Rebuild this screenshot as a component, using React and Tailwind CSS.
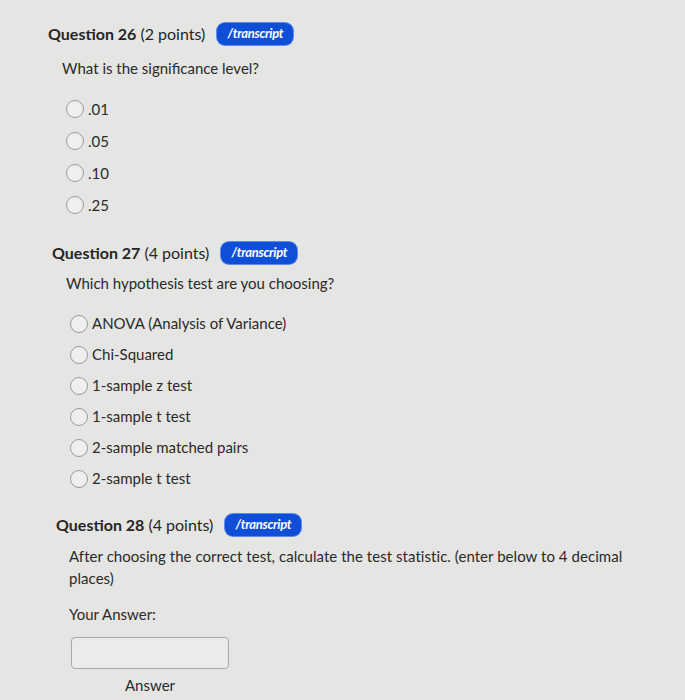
const Badge = () => (
  <span className="ml-[12px] inline-flex h-[22px] w-[76px] items-center justify-center rounded-[8px] bg-[#0f4fd8] text-[13px] font-bold italic tracking-[-0.3px] text-white ring-1 ring-[#5c8bea]">
    /transcript
  </span>
);

const Heading = ({ num, points }) => (
  <div className="flex h-[22px] items-center text-[16px] text-[#262626]">
    <span className="font-bold">Question {num}</span>
    <span className="ml-[4px]">({points} points)</span>
    <Badge />
  </div>
);

const Radio = ({ label, h }) => (
  <div className={`flex items-center ${h}`}>
    <span className="h-[18px] w-[18px] shrink-0 rounded-full border border-[#9a9a9a] bg-[#efefee]" />
    <span className="ml-[4px] text-[15px] text-[#2a2a2a]">{label}</span>
  </div>
);

export default function App() {
  return (
    <div
      className="h-[700px] w-[685px] overflow-hidden bg-[#e5e5e3] text-[#2a2a2a]"
      style={{ fontFamily: "Lato, 'Open Sans', sans-serif" }}
    >
      {/* Question 26 */}
      <div className="pl-[48px] pt-[23px]">
        <Heading num="26" points="2" />
        <div className="mt-[13px] pl-[14px] text-[15px] leading-[20px]">
          What is the significance level?
        </div>
        <div className="mt-[15px] pl-[18px]">
          {[".01", ".05", ".10", ".25"].map((o) => (
            <Radio key={o} label={o} h="h-[32px]" />
          ))}
        </div>
      </div>

      {/* Question 27 */}
      <div className="mt-[21px] pl-[52px]">
        <Heading num="27" points="4" />
        <div className="mt-[9px] pl-[14px] text-[15px] leading-[20px]">
          Which hypothesis test are you choosing?
        </div>
        <div className="mt-[15px] pl-[18px]">
          {[
            "ANOVA (Analysis of Variance)",
            "Chi-Squared",
            "1-sample z test",
            "1-sample t test",
            "2-sample matched pairs",
            "2-sample t test",
          ].map((o) => (
            <Radio key={o} label={o} h="h-[31px]" />
          ))}
        </div>
      </div>

      {/* Question 28 */}
      <div className="mt-[20px] pl-[56px]">
        <Heading num="28" points="4" />
        <div className="mt-[9px] w-[580px] pl-[13px] text-[15px] leading-[22px] tracking-[0.05px]">
          After choosing the correct test, calculate the test statistic. (enter
          below to 4 decimal places)
        </div>
        <div className="mt-[15px] pl-[13px] text-[15px] leading-[20px]">Your Answer:</div>
        <div className="ml-[15px] mt-[13px] h-[32px] w-[158px] rounded-[4px] border border-[#a8a8a8] bg-[#ebebea]" />
        <div className="ml-[15px] mt-[6px] w-[158px] text-center text-[15px] leading-[20px]">
          Answer
        </div>
      </div>
    </div>
  );
}
